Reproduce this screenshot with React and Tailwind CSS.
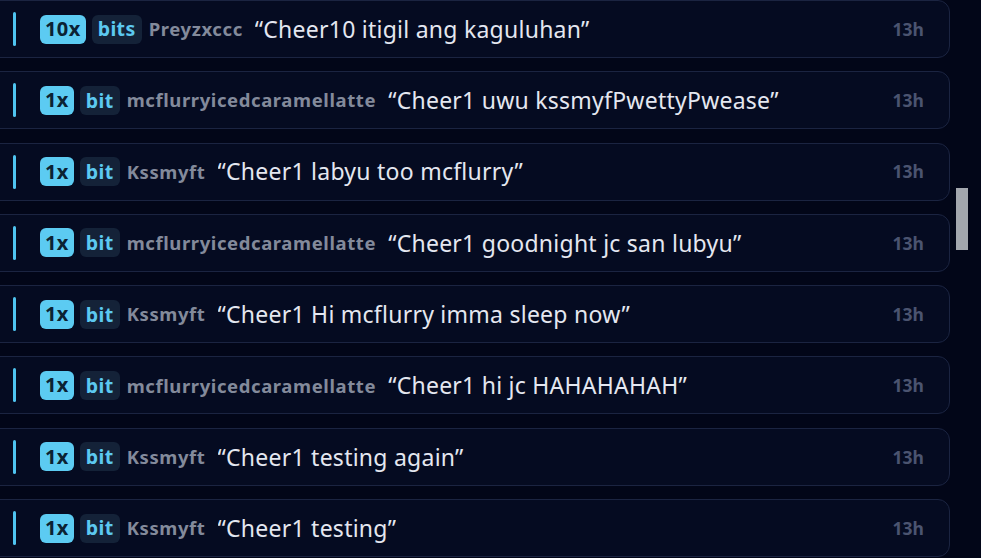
import React from "react";

const cheers = [
  { amount: 10, user: "Preyzxccc", msg: "Cheer10 itigil ang kaguluhan", time: "13h" },
  { amount: 1, user: "mcflurryicedcaramellatte", msg: "Cheer1 uwu kssmyfPwettyPwease", time: "13h" },
  { amount: 1, user: "Kssmyft", msg: "Cheer1 labyu too mcflurry", time: "13h" },
  { amount: 1, user: "mcflurryicedcaramellatte", msg: "Cheer1 goodnight jc san lubyu", time: "13h" },
  { amount: 1, user: "Kssmyft", msg: "Cheer1 Hi mcflurry imma sleep now", time: "13h" },
  { amount: 1, user: "mcflurryicedcaramellatte", msg: "Cheer1 hi jc HAHAHAHAH", time: "13h" },
  { amount: 1, user: "Kssmyft", msg: "Cheer1 testing again", time: "13h" },
  { amount: 1, user: "Kssmyft", msg: "Cheer1 testing", time: "13h" },
];

function CheerRow({ amount, user, msg, time }) {
  return (
    <div className="flex items-center h-[58px] shrink-0 rounded-xl border border-[#1b2441] bg-[#050b21] pl-[28px] pr-[25px]">
      <div className="w-[3px] h-[34px] rounded-full bg-[#4fc4f0]" />
      <div className="flex items-center ml-[24px] min-w-0 flex-1">
        <span className="h-[29px] px-[5px] flex items-center rounded-md bg-[#5ccbf2] text-[#0b2233] text-[20px] font-bold tracking-[0.4px]">
          {amount}x
        </span>
        <span className="h-[29px] ml-[6px] px-[6px] flex items-center rounded-md bg-[#142238] text-[#5cc9f0] text-[19.5px] font-bold tracking-[0.4px]">
          {amount === 1 ? "bit" : "bits"}
        </span>
        <span className="ml-[7px] text-[18.5px] font-bold tracking-[0.6px] text-[#838a9b]">{user}</span>
        <span className="ml-[12px] text-[23px] tracking-[0.25px] text-[#e4e7f0] truncate">
          “{msg}”
        </span>
      </div>
      <span className="text-[17.5px] font-bold text-[#4b5470]">{time}</span>
    </div>
  );
}

export default function App() {
  return (
    <div
      className="relative w-[981px] h-[558px] overflow-hidden bg-[#020618]"
      style={{ fontFamily: "'Noto Sans', sans-serif" }}
    >
      <div className="flex flex-col gap-[13.3px] -ml-[16px] w-[966px]">
        {cheers.map((c, i) => (
          <CheerRow key={i} {...c} />
        ))}
      </div>
      <div className="absolute left-[956px] top-[188px] w-[12px] h-[62px] bg-[#a3a7ae]" />
    </div>
  );
}
